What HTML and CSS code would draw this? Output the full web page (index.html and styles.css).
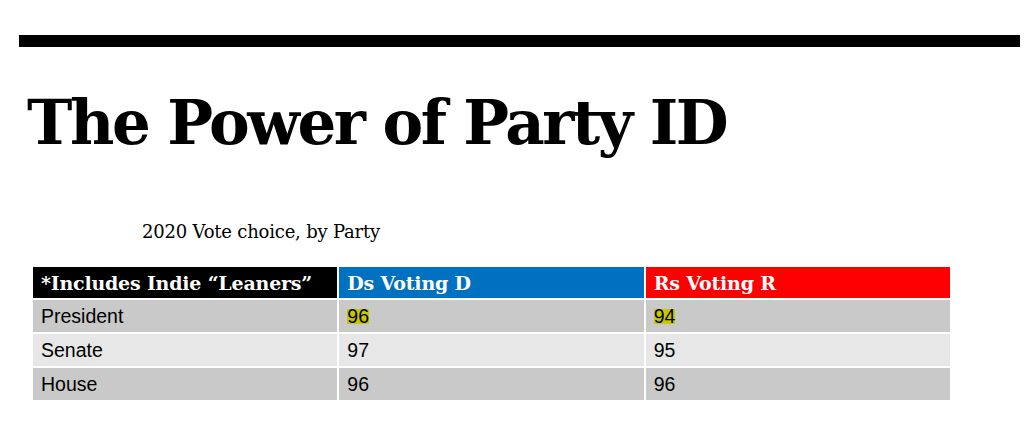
FILE: index.html
```html
<!DOCTYPE html>
<html>
<head>
<meta charset="utf-8">
<link rel="stylesheet" href="styles.css">
</head>
<body>
<div class="page">
  <div class="rule"></div>
  <h1 class="title">The Power of Party ID</h1>
  <p class="caption">2020 Vote choice, by Party</p>
  <div class="table">
    <div class="cell head head-black">*Includes Indie “Leaners”</div>
    <div class="cell head head-blue">Ds Voting D</div>
    <div class="cell head head-red">Rs Voting R</div>

    <div class="cell odd">President</div>
    <div class="cell odd"><span class="hl">96</span></div>
    <div class="cell odd"><span class="hl">94</span></div>

    <div class="cell even">Senate</div>
    <div class="cell even">97</div>
    <div class="cell even">95</div>

    <div class="cell odd">House</div>
    <div class="cell odd">96</div>
    <div class="cell odd">96</div>
  </div>
</div>
</body>
</html>
```

FILE: styles.css
```css
html, body {
  margin: 0;
  padding: 0;
  background: #ffffff;
}

.page {
  padding: 35px 5px 0 19px;
}

.rule {
  height: 12px;
  background: #000000;
}

.title {
  margin: 36px 0 0 8px;
  font-family: "DejaVu Serif", "Liberation Serif", serif;
  font-weight: bold;
  font-size: 61px;
  line-height: 80px;
  color: #000000;
  letter-spacing: -2.4px;
}

.caption {
  margin: 57px 0 0 123px;
  font-family: "DejaVu Serif", serif;
  font-size: 18px;
  line-height: 24px;
  color: #000000;
  letter-spacing: -0.2px;
}

.table {
  margin: 23px 0 0 14px;
  width: 917px;
  display: grid;
  grid-template-columns: 1fr 1fr 1fr;
  gap: 2px;
}

.cell {
  padding: 0 8px;
  height: 32px;
  display: flex;
  align-items: center;
  font-family: "Liberation Sans", Arial, sans-serif;
  font-size: 19.5px;
  color: #000000;
}

.head {
  height: 31px;
  font-family: "DejaVu Serif", serif;
  font-weight: bold;
  font-size: 19px;
  color: #ffffff;
  letter-spacing: -0.2px;
}

.head-black { background: #000000; }
.head-blue { background: #0070c0; }
.head-red { background: #ff0000; }

.odd { background: #c9c9c9; }
.even { background: #e7e7e7; }

.hl {
  display: inline-block;
  line-height: 15px;
  background: #c8c800;
}
```
